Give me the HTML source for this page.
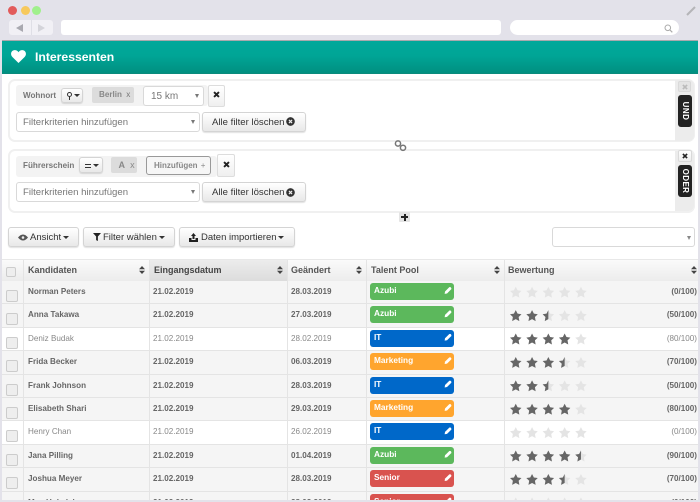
<!DOCTYPE html>
<html lang="de">
<head>
<meta charset="utf-8">
<style>
html,body{margin:0;padding:0;width:700px;height:502px;overflow:hidden;background:#e3e2ea;font-family:"Liberation Sans",Arial,sans-serif;color:#555}
#p{position:relative;width:700px;height:502px;overflow:hidden;background:#e3e2ea;filter:blur(.3px)}
#p div,#p span.a{position:absolute;box-sizing:border-box;white-space:nowrap}
#p i{font-style:normal}
.btn{background:linear-gradient(#fff,#e8e8e8);border:1px solid #d4d4d4;border-radius:3px;color:#333;font-size:9.5px;box-shadow:0 1px 1px rgba(0,0,0,.12)}
.sel{background:#fff;border:1px solid #d9d9d9;border-radius:3px;color:#777;font-size:9.6px}
.car{position:absolute;width:0;height:0;border-left:3px solid transparent;border-right:3px solid transparent;border-top:3px solid #333}
.gar{position:absolute;width:0;height:0;border-left:2.5px solid transparent;border-right:2.5px solid transparent;border-top:4px solid #777}
.th{top:260px;height:21px;font-size:9px;font-weight:bold;color:#555;line-height:21px;background:linear-gradient(#fafafa,#ececec)}
.row{left:2px;width:696px;height:23.4px;border-bottom:1px solid #e4e4e4;font-size:8.1px;font-weight:bold;color:#666;background:#f5f5f5}
.row.w{background:#fff;font-weight:normal;color:#888}
.row span{position:absolute;top:4px;line-height:13px;white-space:nowrap}
.cb{position:absolute;left:4px;top:9px;width:10px;height:10px;background:#eee;border:1px solid #ccc;border-radius:2px}
.tag{position:absolute;left:368px;top:2px;width:84px;height:17px;border-radius:3px;color:#fff;font-weight:bold;font-size:8.3px}
.row .tag span{left:4px;top:1px}
.g{background:#5cb85c}.b{background:#0068c9}.o{background:#ffa52e}.r{background:#d9534f}
.row .sc{right:1px;top:4px;font-size:8.1px}
.vl{top:260px;width:1px;height:240px;background:#e4e4e4}
.th b{position:absolute;right:4px;top:6px;width:6px;height:8px}
.th b svg{display:block}
</style>
</head>
<body>
<div id="p">
<svg style="position:absolute;left:0;top:0;width:0;height:0"><defs>
<symbol id="st" viewBox="0 0 24 24"><polygon points="12,.5 15.800,7.800 24,9 18,14.800 19.500,23.300 12,19.300 4.500,23.300 6,14.800 0,9 8.200,7.800"/></symbol>
<symbol id="hs" viewBox="0 0 24 24"><polygon points="12,.5 12,19.300 4.500,23.300 6,14.800 0,9 8.200,7.800"/></symbol>
<symbol id="pe" viewBox="0 0 10 10"><path d="M.8 9.200 L1.300 6.200 L6.500 1 Q7.500 .2 8.600 1.200 Q9.800 2.400 9 3.500 L3.800 8.700 Z" fill="#fff"/></symbol>
<symbol id="so" viewBox="0 0 6 8"><path d="M3 0 L6 3.200 H0 Z M3 8 L0 4.800 H6 Z" fill="#444"/></symbol>
<symbol id="xx" viewBox="0 0 8 8"><path d="M1.200 1.200 L6.800 6.800 M6.800 1.200 L1.200 6.800" stroke="currentColor" stroke-width="2.200" fill="none"/></symbol>
<symbol id="cx" viewBox="0 0 10 10"><circle cx="5" cy="5" r="4.800" fill="#333"/><path d="M3.300 3.300 L6.700 6.700 M6.700 3.300 L3.300 6.700" stroke="#eee" stroke-width="1.400"/></symbol>
</defs></svg>

<!-- browser chrome -->
<div style="left:8px;top:6px;width:9px;height:9px;border-radius:50%;background:#e25b5b"></div>
<div style="left:20.500px;top:6px;width:9px;height:9px;border-radius:50%;background:#f7c95c"></div>
<div style="left:32px;top:6px;width:9px;height:9px;border-radius:50%;background:#a0f08c"></div>
<div style="left:9px;top:20px;width:44px;height:15px;border-radius:3px;background:#f1f0f5"></div>
<div style="left:31px;top:20px;width:1px;height:15px;background:#dfdfe6"></div>
<div style="left:16px;top:24px;width:0;height:0;border-top:4px solid transparent;border-bottom:4px solid transparent;border-right:7px solid #a9a9b0"></div>
<div style="left:38px;top:24px;width:0;height:0;border-top:4px solid transparent;border-bottom:4px solid transparent;border-left:7px solid #d4d4da"></div>
<div style="left:61px;top:20px;width:440px;height:15px;border-radius:3px;background:#fff"></div>
<div style="left:510px;top:20px;width:169px;height:15px;border-radius:8px;background:#fff"></div>
<svg style="position:absolute;left:664px;top:24px" width="9" height="9" viewBox="0 0 9 9"><circle cx="3.800" cy="3.800" r="2.800" fill="none" stroke="#aaa" stroke-width="1"/><path d="M6 6 L8.300 8.300" stroke="#aaa" stroke-width="1.200"/></svg>
<svg style="position:absolute;left:686px;top:6px" width="10" height="10" viewBox="0 0 10 10"><path d="M1 9 L9 1" stroke="#b5b5b8" stroke-width="2"/></svg>

<!-- window -->
<div style="left:2px;top:41px;width:696px;height:461px;background:#fff"></div>
<div style="left:2px;top:40px;width:696px;height:1px;background:#a9a9ad"></div>
<div style="left:2px;top:41px;width:696px;height:33px;background:linear-gradient(#00a89a 0%,#00a596 45%,#008f80 100%);border-bottom:1px solid #0a8a7c"></div>
<svg style="position:absolute;left:11px;top:50px" width="15" height="13" viewBox="0 0 15 13"><path d="M7.500 13 L1.400 7 C-.8 4.800 -.2 1 2.800 .3 C5 -.2 6.600 .8 7.500 2.300 C8.400 .8 10 -.2 12.200 .3 C15.200 1 15.800 4.800 13.600 7 Z" fill="#fff"/></svg>
<div style="left:35px;top:49px;font-size:12.200px;font-weight:bold;color:#fff;line-height:16px">Interessenten</div>

<!-- panel 1 -->
<div style="left:8px;top:79px;width:687px;height:63px;border:2px solid #f0f0f0;border-radius:7px;background:#fff"></div>
<div style="left:675px;top:80px;width:19px;height:61px;background:#ececec;border-radius:0 6px 6px 0"></div>
<div style="left:16px;top:85px;width:192px;height:21px;background:#f3f3f3;border-radius:3px"></div>
<div style="left:23px;top:90px;font-size:8.100px;font-weight:bold;color:#777;line-height:11px">Wohnort</div>
<div class="btn" style="left:61px;top:88px;width:22px;height:15px"><span class="a" style="left:5px;top:2.500px;width:5px;height:5px;border-radius:50%;border:1.500px solid #333"></span><span class="a" style="left:7px;top:7px;width:1px;height:4px;background:#333"></span><i class="car" style="left:12px;top:5px"></i></div>
<div style="left:92px;top:87px;width:42px;height:16px;background:#dcdcdc;border-radius:2px;font-size:8.100px;font-weight:bold;color:#888;line-height:15px;padding-left:7px">Berlin <span style="font-weight:normal;color:#777;margin-left:2px">x</span></div>
<div class="sel" style="left:143px;top:86px;width:61px;height:20px;line-height:20px;padding-left:7px;font-size:10px">15 km<i class="gar" style="right:4px;top:6.500px"></i></div>
<div style="left:208px;top:85px;width:17px;height:22px;background:linear-gradient(#fff,#efefef);border:1px solid #ddd;border-radius:2px;color:#222"><svg style="position:absolute;left:4px;top:5px;display:block" width="7" height="7"><use href="#xx"/></svg></div>
<div class="sel" style="left:16px;top:112px;width:184px;height:20px;line-height:19px;padding-left:6px">Filterkriterien hinzufügen<i class="gar" style="right:4px;top:7px"></i></div>
<div class="btn" style="left:202px;top:112px;width:104px;height:20px;line-height:19px;padding-left:9px;font-size:9.600px">Alle filter löschen<svg style="position:absolute;left:83px;top:4px;display:block" width="9" height="9"><use href="#cx"/></svg></div>
<div style="left:678px;top:81px;width:13px;height:11px;background:#e4e4e4;border:1px solid #d9d9d9;border-radius:2px;color:#bbb"><svg style="position:absolute;left:2.500px;top:1.500px;display:block" width="6" height="6"><use href="#xx"/></svg></div>
<div style="left:678px;top:95px;width:14px;height:32px;background:#222;border-radius:3px"></div>
<div style="left:685px;top:111px;width:0;height:0"><span class="a" style="left:-15px;top:-6px;width:30px;height:12px;transform:rotate(90deg);text-align:center;color:#fff;font-size:8px;font-weight:bold;line-height:12px;letter-spacing:.5px">UND</span></div>

<!-- panel 2 -->
<div style="left:8px;top:149px;width:687px;height:64px;border:2px solid #f0f0f0;border-radius:7px;background:#fff"></div>
<div style="left:675px;top:151px;width:19px;height:60px;background:#ececec;border-radius:0 6px 6px 0"></div>
<div style="left:16px;top:156px;width:201px;height:21px;background:#f3f3f3;border-radius:3px"></div>
<div style="left:23px;top:160px;font-size:8.100px;font-weight:bold;color:#777;line-height:11px">Führerschein</div>
<div class="btn" style="left:79px;top:157px;width:24px;height:16px"><span class="a" style="left:5px;top:5.500px;width:6px;height:1.500px;background:#333"></span><span class="a" style="left:5px;top:8.500px;width:6px;height:1.500px;background:#333"></span><i class="car" style="left:13px;top:5.500px"></i></div>
<div style="left:111px;top:157px;width:26px;height:16px;background:#dcdcdc;border-radius:2px;font-size:9px;font-weight:bold;color:#888;line-height:16px;padding-left:7.500px">A <span style="font-weight:normal;margin-left:3px">x</span></div>
<div style="left:146px;top:156px;width:65px;height:19px;background:#f6f6f6;border:1px solid #999;border-radius:3px;font-size:8px;font-weight:bold;color:#888;line-height:17px;padding-left:7px">Hinzufügen <span style="font-weight:normal;margin-left:1px">+</span></div>
<div style="left:217px;top:154px;width:18px;height:23px;background:linear-gradient(#fff,#efefef);border:1px solid #ddd;border-radius:2px;color:#222"><svg style="position:absolute;left:4.500px;top:6px;display:block" width="7" height="7"><use href="#xx"/></svg></div>
<div class="sel" style="left:16px;top:182px;width:184px;height:20px;line-height:19px;padding-left:6px">Filterkriterien hinzufügen<i class="gar" style="right:4px;top:6.700px"></i></div>
<div class="btn" style="left:202px;top:182px;width:104px;height:20px;line-height:19px;padding-left:9px;font-size:9.600px">Alle filter löschen<svg style="position:absolute;left:83px;top:4.500px;display:block" width="9" height="9"><use href="#cx"/></svg></div>
<div style="left:678px;top:150px;width:14px;height:12px;background:linear-gradient(#fff,#eee);border:1px solid #d9d9d9;border-radius:2px;color:#222"><svg style="position:absolute;left:3px;top:2px;display:block" width="6" height="6"><use href="#xx"/></svg></div>
<div style="left:678px;top:165px;width:14px;height:32px;background:#222;border-radius:3px"></div>
<div style="left:685px;top:181px;width:0;height:0"><span class="a" style="left:-15px;top:-6px;width:30px;height:12px;transform:rotate(90deg);text-align:center;color:#fff;font-size:8px;font-weight:bold;line-height:12px;letter-spacing:.4px">ODER</span></div>

<!-- link icon -->
<svg style="position:absolute;left:393px;top:139px" width="15" height="13" viewBox="0 0 15 13"><circle cx="5" cy="4.500" r="2.600" fill="none" stroke="#777" stroke-width="1.500"/><circle cx="10" cy="8.800" r="2.600" fill="none" stroke="#777" stroke-width="1.500"/></svg>

<!-- plus -->
<div style="left:399px;top:212px;width:11px;height:10px;background:#e4e4e4;border-radius:1px"></div>
<div style="left:401px;top:216px;width:7px;height:2px;background:#222"></div>
<div style="left:403.500px;top:213.500px;width:2px;height:7px;background:#222"></div>

<!-- toolbar -->
<div class="btn" style="left:8px;top:227px;width:71px;height:20px;line-height:19px;padding-left:21px">Ansicht<i class="car" style="left:54px;top:8px"></i></div>
<svg style="position:absolute;left:18px;top:234px" width="10" height="7" viewBox="0 0 10 7"><path d="M0 3.500 Q5 -2.500 10 3.500 Q5 9.500 0 3.500 Z" fill="#555"/><circle cx="5" cy="3.500" r="1.300" fill="#eee"/></svg>
<div class="btn" style="left:83px;top:227px;width:92px;height:20px;line-height:19px;padding-left:19px">Filter wählen<i class="car" style="left:75px;top:8px"></i></div>
<svg style="position:absolute;left:93px;top:233px" width="8" height="8" viewBox="0 0 9 9"><path d="M0 0 H9 L5.500 4 V9 L3.500 8 V4 Z" fill="#222"/></svg>
<div class="btn" style="left:179px;top:227px;width:116px;height:20px;line-height:19px;padding-left:21px">Daten importieren<i class="car" style="left:98px;top:8px"></i></div>
<svg style="position:absolute;left:189px;top:233px" width="9" height="9" viewBox="0 0 9 9"><path d="M4.500 0 L7 3 H5.500 V6 H3.500 V3 H2 Z M0 5 H2.500 V7 H6.500 V5 H9 V9 H0 Z" fill="#222"/></svg>
<div class="sel" style="left:552px;top:227px;width:143px;height:20px"><i class="gar" style="right:3px;top:8px;border-top-color:#888"></i></div>

<!-- table -->
<div style="left:2px;top:259px;width:696px;height:1px;background:#e8e8e8"></div>
<div class="th" style="left:2px;width:21px"><span class="a" style="left:4px;top:7px;width:10px;height:10px;background:#eee;border:1px solid #ccc;border-radius:2px"></span></div>
<div class="th" style="left:23px;width:126px;padding-left:5px">Kandidaten<b><svg width="6" height="8"><use href="#so"/></svg></b></div>
<div class="th" style="left:149px;width:138px;padding-left:5px;background:linear-gradient(#ececec,#dcdcdc);color:#444">Eingangsdatum<b><svg width="6" height="8"><use href="#so"/></svg></b></div>
<div class="th" style="left:287px;width:79px;padding-left:4px">Geändert<b><svg width="6" height="8"><use href="#so"/></svg></b></div>
<div class="th" style="left:366px;width:138px;padding-left:5px">Talent Pool<b><svg width="6" height="8"><use href="#so"/></svg></b></div>
<div class="th" style="left:504px;width:194px;padding-left:4px">Bewertung<b style="right:1px"><svg width="6" height="8"><use href="#so"/></svg></b></div>

<div class="row" style="top:281px"><i class="cb"></i><span style="left:26px">Norman Peters</span><span style="left:151px">21.02.2019</span><span style="left:289px">28.03.2019</span><i class="tag g"><span>Azubi</span></i><span class="sc">(0/100)</span></div>
<div class="row" style="top:304.400px"><i class="cb"></i><span style="left:26px">Anna Takawa</span><span style="left:151px">21.02.2019</span><span style="left:289px">27.03.2019</span><i class="tag g"><span>Azubi</span></i><span class="sc">(50/100)</span></div>
<div class="row w" style="top:327.800px"><i class="cb"></i><span style="left:26px">Deniz Budak</span><span style="left:151px">21.02.2019</span><span style="left:289px">28.02.2019</span><i class="tag b"><span>IT</span></i><span class="sc">(80/100)</span></div>
<div class="row" style="top:351.200px"><i class="cb"></i><span style="left:26px">Frida Becker</span><span style="left:151px">21.02.2019</span><span style="left:289px">06.03.2019</span><i class="tag o"><span>Marketing</span></i><span class="sc">(70/100)</span></div>
<div class="row" style="top:374.600px"><i class="cb"></i><span style="left:26px">Frank Johnson</span><span style="left:151px">21.02.2019</span><span style="left:289px">28.03.2019</span><i class="tag b"><span>IT</span></i><span class="sc">(50/100)</span></div>
<div class="row" style="top:398px"><i class="cb"></i><span style="left:26px">Elisabeth Shari</span><span style="left:151px">21.02.2019</span><span style="left:289px">29.03.2019</span><i class="tag o"><span>Marketing</span></i><span class="sc">(80/100)</span></div>
<div class="row w" style="top:421.400px"><i class="cb"></i><span style="left:26px">Henry Chan</span><span style="left:151px">21.02.2019</span><span style="left:289px">26.02.2019</span><i class="tag b"><span>IT</span></i><span class="sc">(0/100)</span></div>
<div class="row" style="top:444.800px"><i class="cb"></i><span style="left:26px">Jana Pilling</span><span style="left:151px">21.02.2019</span><span style="left:289px">01.04.2019</span><i class="tag g"><span>Azubi</span></i><span class="sc">(90/100)</span></div>
<div class="row" style="top:468.200px"><i class="cb"></i><span style="left:26px">Joshua Meyer</span><span style="left:151px">21.02.2019</span><span style="left:289px">28.03.2019</span><i class="tag r"><span>Senior</span></i><span class="sc">(70/100)</span></div>
<div class="row" style="top:491.600px"><i class="cb"></i><span style="left:26px">Max Holzdek</span><span style="left:151px">21.02.2019</span><span style="left:289px">28.03.2019</span><i class="tag r"><span>Senior</span></i><span class="sc">(0/100)</span></div>

<div class="vl" style="left:23px"></div>
<div class="vl" style="left:149px"></div>
<div class="vl" style="left:287px"></div>
<div class="vl" style="left:366px"></div>
<div class="vl" style="left:504px"></div>

<!-- stars and pencils -->
<svg style="position:absolute;left:0;top:0" width="700" height="502" viewBox="0 0 700 502">
<g transform="translate(0,.5)">
<g fill="#e4e4e4">
<use href="#st" x="510" y="286" width="11.500" height="11.500"/><use href="#st" x="526.300" y="286" width="11.500" height="11.500"/><use href="#st" x="542.600" y="286" width="11.500" height="11.500"/><use href="#st" x="558.900" y="286" width="11.500" height="11.500"/><use href="#st" x="575.200" y="286" width="11.500" height="11.500"/>
<use href="#st" x="542.600" y="309.400" width="11.500" height="11.500"/><use href="#st" x="558.900" y="309.400" width="11.500" height="11.500"/><use href="#st" x="575.200" y="309.400" width="11.500" height="11.500"/>
<use href="#st" x="575.200" y="332.800" width="11.500" height="11.500"/>
<use href="#st" x="558.900" y="356.200" width="11.500" height="11.500"/><use href="#st" x="575.200" y="356.200" width="11.500" height="11.500"/>
<use href="#st" x="542.600" y="379.600" width="11.500" height="11.500"/><use href="#st" x="558.900" y="379.600" width="11.500" height="11.500"/><use href="#st" x="575.200" y="379.600" width="11.500" height="11.500"/>
<use href="#st" x="575.200" y="403" width="11.500" height="11.500"/>
<use href="#st" x="510" y="426.400" width="11.500" height="11.500"/><use href="#st" x="526.300" y="426.400" width="11.500" height="11.500"/><use href="#st" x="542.600" y="426.400" width="11.500" height="11.500"/><use href="#st" x="558.900" y="426.400" width="11.500" height="11.500"/><use href="#st" x="575.200" y="426.400" width="11.500" height="11.500"/>
<use href="#st" x="575.200" y="449.800" width="11.500" height="11.500"/>
<use href="#st" x="558.900" y="473.200" width="11.500" height="11.500"/><use href="#st" x="575.200" y="473.200" width="11.500" height="11.500"/>
<use href="#st" x="510" y="496.600" width="11.500" height="11.500"/><use href="#st" x="526.300" y="496.600" width="11.500" height="11.500"/><use href="#st" x="542.600" y="496.600" width="11.500" height="11.500"/><use href="#st" x="558.900" y="496.600" width="11.500" height="11.500"/><use href="#st" x="575.200" y="496.600" width="11.500" height="11.500"/>
</g>
<g fill="#666">
<use href="#st" x="510" y="309.400" width="11.500" height="11.500"/><use href="#st" x="526.300" y="309.400" width="11.500" height="11.500"/><use href="#hs" x="542.600" y="309.400" width="11.500" height="11.500"/>
<use href="#st" x="510" y="332.800" width="11.500" height="11.500"/><use href="#st" x="526.300" y="332.800" width="11.500" height="11.500"/><use href="#st" x="542.600" y="332.800" width="11.500" height="11.500"/><use href="#st" x="558.900" y="332.800" width="11.500" height="11.500"/>
<use href="#st" x="510" y="356.200" width="11.500" height="11.500"/><use href="#st" x="526.300" y="356.200" width="11.500" height="11.500"/><use href="#st" x="542.600" y="356.200" width="11.500" height="11.500"/><use href="#hs" x="558.900" y="356.200" width="11.500" height="11.500"/>
<use href="#st" x="510" y="379.600" width="11.500" height="11.500"/><use href="#st" x="526.300" y="379.600" width="11.500" height="11.500"/><use href="#hs" x="542.600" y="379.600" width="11.500" height="11.500"/>
<use href="#st" x="510" y="403" width="11.500" height="11.500"/><use href="#st" x="526.300" y="403" width="11.500" height="11.500"/><use href="#st" x="542.600" y="403" width="11.500" height="11.500"/><use href="#st" x="558.900" y="403" width="11.500" height="11.500"/>
<use href="#st" x="510" y="449.800" width="11.500" height="11.500"/><use href="#st" x="526.300" y="449.800" width="11.500" height="11.500"/><use href="#st" x="542.600" y="449.800" width="11.500" height="11.500"/><use href="#st" x="558.900" y="449.800" width="11.500" height="11.500"/><use href="#hs" x="575.200" y="449.800" width="11.500" height="11.500"/>
<use href="#st" x="510" y="473.200" width="11.500" height="11.500"/><use href="#st" x="526.300" y="473.200" width="11.500" height="11.500"/><use href="#st" x="542.600" y="473.200" width="11.500" height="11.500"/><use href="#hs" x="558.900" y="473.200" width="11.500" height="11.500"/>
</g>
</g>
<use href="#pe" x="444" y="286.500" width="8" height="8"/>
<use href="#pe" x="444" y="309.900" width="8" height="8"/>
<use href="#pe" x="444" y="333.300" width="8" height="8"/>
<use href="#pe" x="444" y="356.700" width="8" height="8"/>
<use href="#pe" x="444" y="380.100" width="8" height="8"/>
<use href="#pe" x="444" y="403.500" width="8" height="8"/>
<use href="#pe" x="444" y="426.900" width="8" height="8"/>
<use href="#pe" x="444" y="450.300" width="8" height="8"/>
<use href="#pe" x="444" y="473.700" width="8" height="8"/>
<use href="#pe" x="444" y="497.100" width="8" height="8"/>
</svg>

<!-- frame edges -->
<div style="left:0;top:500px;width:700px;height:2px;background:#e3e2ea"></div>
<div style="left:0;top:41px;width:2px;height:461px;background:#e3e2ea"></div>
<div style="left:698px;top:41px;width:2px;height:461px;background:#e3e2ea"></div>
</div>
</body>
</html>
